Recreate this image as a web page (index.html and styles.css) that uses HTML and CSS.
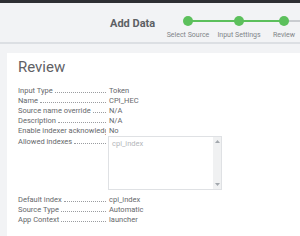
FILE: index.html
```html
<!DOCTYPE html>
<html>
<head>
<meta charset="utf-8">
<link rel="stylesheet" href="styles.css">
</head>
<body>
<div class="topbar"></div>
<div class="header">
  <div class="title">Add Data</div>
  <div class="steps">
    <div class="track"><div class="track-done"></div></div>
    <div class="step s1"><span class="dot"></span><span class="label">Select Source</span></div>
    <div class="step s2"><span class="dot"></span><span class="label">Input Settings</span></div>
    <div class="step s3"><span class="dot"></span><span class="label">Review</span></div>
  </div>
</div>
<div class="page">
  <div class="panel">
    <h1 class="heading">Review</h1>
    <div class="rows">
      <div class="row"><span class="key"><span class="name">Input Type</span><span class="lead"></span></span><span class="val">Token</span></div>
      <div class="row"><span class="key"><span class="name">Name</span><span class="lead"></span></span><span class="val">CPI_HEC</span></div>
      <div class="row"><span class="key"><span class="name">Source name override</span><span class="lead"></span></span><span class="val">N/A</span></div>
      <div class="row"><span class="key"><span class="name">Description</span><span class="lead"></span></span><span class="val">N/A</span></div>
      <div class="row"><span class="key"><span class="name clip">Enable indexer acknowledg</span></span><span class="val">No</span></div>
      <div class="row row-box"><span class="key"><span class="name">Allowed indexes</span><span class="lead"></span></span>
        <div class="box">
          <div class="box-text">cpi_index</div>
          <div class="scroll">
            <svg class="arr" width="5" height="3" viewBox="0 0 5 3"><path d="M0 3 L2.5 0 L5 3 Z" fill="#a3a8ad"/></svg>
            <svg class="arr" width="5" height="3" viewBox="0 0 5 3"><path d="M0 0 L2.5 3 L5 0 Z" fill="#a3a8ad"/></svg>
          </div>
        </div>
      </div>
      <div class="row"><span class="key"><span class="name">Default index</span><span class="lead"></span></span><span class="val">cpi_index</span></div>
      <div class="row"><span class="key"><span class="name">Source Type</span><span class="lead"></span></span><span class="val">Automatic</span></div>
      <div class="row"><span class="key"><span class="name">App Context</span><span class="lead"></span></span><span class="val">launcher</span></div>
    </div>
  </div>
</div>
</body>
</html>
```
FILE: styles.css
```css
html, body {
  margin: 0;
  padding: 0;
}
body {
  width: 300px;
  height: 236px;
  overflow: hidden;
  background: #f2f3f5;
  font-family: Roboto, "Liberation Sans", sans-serif;
  color: #66686b;
}
.topbar {
  height: 3px;
  background: #2d2f33;
}
.header {
  height: 39px;
  background: #f2f3f5;
  border-bottom: 2px solid #dcdfe3;
  display: flex;
  align-items: center;
}
.title {
  margin-left: 110px;
  width: 40px;
  flex-shrink: 0;
  white-space: nowrap;
  font-size: 11px;
  font-weight: bold;
  color: #5d6064;
  margin-top: 1px;
}
.steps {
  position: relative;
  display: flex;
  margin-left: 18px;
  height: 39px;
  flex-shrink: 0;
}
.track {
  position: absolute;
  left: 20px;
  width: 112px;
  top: 17px;
  height: 2px;
  background: #c9ccd0;
}
.track-done {
  width: 96px;
  height: 2px;
  background: #5cc05c;
}
.step {
  position: relative;
  display: flex;
  flex-direction: column;
  align-items: center;
  padding-top: 13px;
}
.s1 { width: 40px; }
.s2 { width: 40px; margin-left: 11px; }
.s3 { width: 22px; margin-left: 14px; }
.dot {
  width: 10px;
  height: 10px;
  border-radius: 50%;
  background: #5cc05c;
}
.label {
  margin-top: 5px;
  font-size: 7px;
  color: #818488;
  white-space: nowrap;
}
.page {
  padding: 9px 0 0 7px;
}
.panel {
  background: #fff;
  height: 178px;
  padding: 5px 0 0 11px;
}
.heading {
  margin: 0;
  font-size: 15px;
  font-weight: normal;
  color: #5f6165;
  line-height: 18px;
}
.rows {
  margin-top: 10px;
  font-size: 7.5px;
}
.row {
  display: flex;
  height: 10px;
  line-height: 10px;
}
.key {
  width: 88px;
  display: flex;
  align-items: baseline;
  flex-shrink: 0;
}
.name {
  white-space: nowrap;
}
.clip {
  overflow: hidden;
  width: 88px;
}
.lead {
  flex: 1;
  margin-left: 2px;
  border-bottom: 1px dotted #9a9ca0;
  height: 6px;
}
.val {
  margin-left: 3px;
  white-space: nowrap;
}
.row-box {
  height: auto;
  margin-bottom: 5px;
}
.row-box .key {
  margin-top: 1px;
  height: 10px;
}
.box {
  margin-left: 2px;
  width: 112px;
  height: 52px;
  border: 1px solid #dfe1e4;
  display: flex;
}
.box-text {
  flex: 1;
  color: #b3b6ba;
  padding: 2px 0 0 3px;
}
.scroll {
  width: 8px;
  background: #f0f1f2;
  display: flex;
  flex-direction: column;
  justify-content: space-between;
  align-items: center;
  padding: 3px 0;
}
.arr {
  display: block;
}
```
